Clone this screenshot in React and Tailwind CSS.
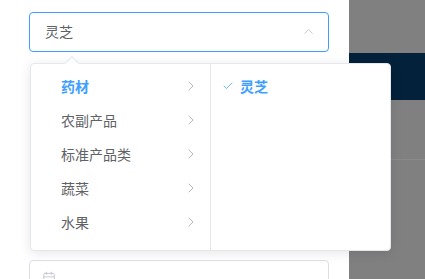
import { ChevronUp, ChevronRight, Check, Calendar } from 'lucide-react';

const items = ['药材', '农副产品', '标准产品类', '蔬菜', '水果'];

export default function App() {
  return (
    <div className="relative flex h-[279px] w-[425px] overflow-hidden font-['Noto_Sans_CJK_SC',sans-serif] text-[14px]">
      {/* left form panel */}
      <div className="w-[349px] shrink-0 bg-white">
        <div className="ml-[29px] mt-[12px] flex h-[40px] w-[300px] items-center justify-between rounded-[4px] border border-[#409eff] pb-[1px] pl-[15px] pr-[12px] text-[#606266]">
          <span>灵芝</span>
          <ChevronUp className="h-[15px] w-[15px] text-[#c0c4cc]" strokeWidth={1.5} />
        </div>
        <div className="ml-[29px] mt-[208px] flex h-[40px] w-[300px] items-start rounded-[4px] border border-[#dcdfe6] pl-[12px] pt-[10px]">
          <Calendar className="h-[14px] w-[14px] text-[#c0c4cc]" strokeWidth={1.5} />
        </div>
      </div>

      {/* right background, dimmed */}
      <div className="flex-1 bg-[#808080]">
        <div className="mt-[53px] h-[47px] bg-[#03213a]" />
        <div className="mt-[59px] h-px bg-[#8a8a8a]" />
      </div>

      {/* cascader dropdown */}
      <div className="absolute left-[30px] top-[63px] flex h-[188px] w-[361px] rounded-[4px] border border-[#e4e7ed] bg-white shadow-[0_2px_12px_0_rgba(0,0,0,0.1)]">
        <div className="absolute -top-[6px] left-[36px] h-[10px] w-[10px] rotate-45 border-l border-t border-[#e4e7ed] bg-white" />
        <div className="w-[180px] border-r border-[#e4e7ed] pt-[5px]">
          {items.map((t, i) => (
            <div
              key={t}
              className={`flex h-[34px] items-center justify-between pl-[30px] pr-[11px] ${i === 0 ? 'font-semibold text-[#409eff]' : 'text-[#606266]'}`}
            >
              <span>{t}</span>
              <ChevronRight className="h-[16px] w-[16px] text-[#a8abb2]" strokeWidth={1.3} />
            </div>
          ))}
        </div>
        <div className="flex-1 pt-[5px]">
          <div className="flex h-[34px] items-center pl-[11px] font-semibold text-[#409eff]">
            <Check className="mr-[6px] h-[12px] w-[12px]" strokeWidth={1.5} />
            <span>灵芝</span>
          </div>
        </div>
      </div>
    </div>
  );
}
